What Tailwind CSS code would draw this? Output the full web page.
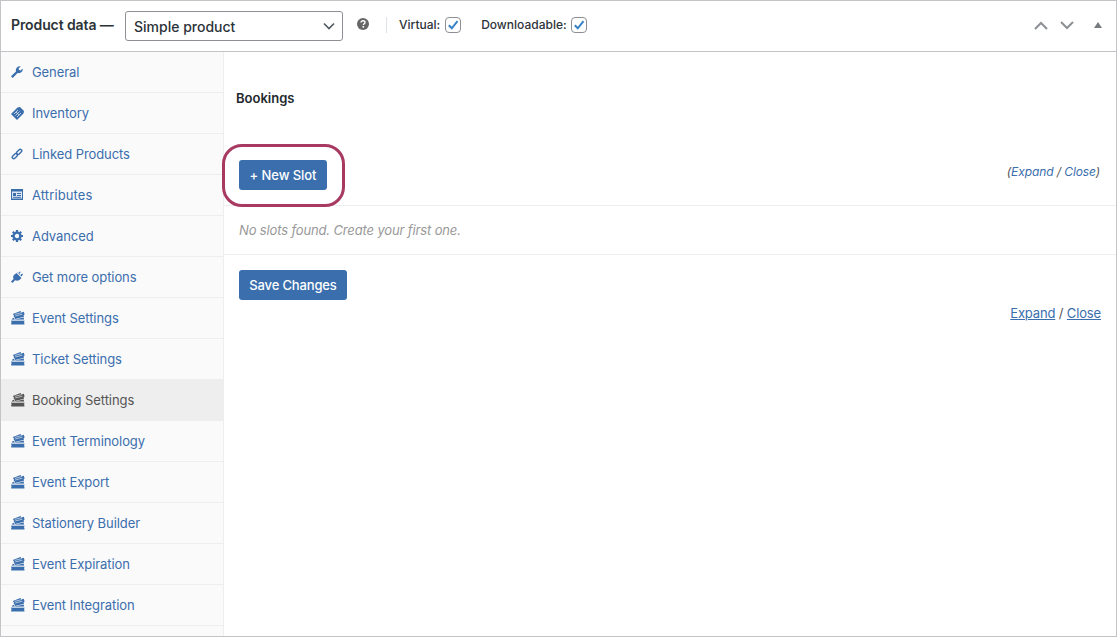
<!DOCTYPE html>
<html><head><meta charset="utf-8"><script src="https://cdn.jsdelivr.net/npm/@tailwindcss/browser@4"></script></head>
<body class="m-0 bg-white">
<svg width="0" height="0" class="absolute">
<defs>
<symbol id="tk" viewBox="0 0 14 14"><path fill="currentColor" d="M1.800 3 9.600 0 10.400 1.400 12.800 .8 13.600 3.600 12.600 4.200 13 5.800 4 8 3.400 6 2.600 5.600 3 4.400Z"/><path fill="currentColor" d="M1.200 7.400 3 6.800 3.600 8.400 12.800 6.400 13 8.800H.8Z"/><path fill="currentColor" d="M.2 9.400H13.400V10.600L12.800 11.200 13.400 11.800V13.400H.2V11.800L.8 11.200.2 10.600Z"/><path stroke="#fafafa" stroke-width=".6" fill="none" d="M3.800 3.400 10.600 1.600M4.200 5 11.400 3.200M1 9.100H13"/></symbol>
</defs></svg>
<div class="w-[1117px] h-[637px] border border-[#c3c4c7] box-border flex flex-col overflow-hidden font-['Inter',sans-serif] text-[13px] text-[#2c3338]">
  <header class="h-[51px] shrink-0 border-b border-[#c3c4c7] flex items-center pl-[10px] pr-[14px] box-border">
    <span class="font-semibold text-[14px] w-[114px] -mt-[4px] whitespace-nowrap tracking-[-0.1px]">Product data —</span>
    <div class="w-[218px] h-[30px] border border-[#8c8f94] rounded-[3px] flex items-center justify-between pl-[8px] pr-[6px] box-border text-[14px] font-medium">
      <span>Simple product</span>
      <svg width="14" height="14" viewBox="0 0 14 14" fill="none" stroke="#50575e" stroke-width="1.6"><path d="M2 4.500 7 9.500 12 4.500"/></svg>
    </div>
    <svg class="ml-[14px] -mt-[4px]" width="12" height="12" viewBox="0 0 12 12"><circle cx="6" cy="6" r="6" fill="#666"/><path d="M4 4.600C4 3.400 5 2.800 6 2.800 7.200 2.800 8 3.500 8 4.500 8 5.800 6.400 5.800 6.400 7" fill="none" stroke="#fff" stroke-width="1.400"/><rect x="5.500" y="8" width="1.600" height="1.600" fill="#fff"/></svg>
    <span class="w-px h-[16px] bg-[#dde3e8] ml-[17px] -mt-[3px]"></span>
    <span class="ml-[12px] font-medium text-[12px] -mt-[3px]">Virtual:</span>
    <span class="ml-[5px] w-[16px] h-[16px] border border-[#8c8f94] rounded-[4px] flex items-center justify-center -mt-[3px]"><svg width="12" height="12" viewBox="0 0 12 12" fill="none" stroke="#3582c4" stroke-width="2"><path d="M1.800 6.200 4.800 9.300 10.500 2.200"/></svg></span>
    <span class="ml-[20px] font-medium text-[12px] -mt-[3px]">Downloadable:</span>
    <span class="ml-[4px] w-[16px] h-[16px] border border-[#8c8f94] rounded-[4px] flex items-center justify-center -mt-[3px]"><svg width="12" height="12" viewBox="0 0 12 12" fill="none" stroke="#3582c4" stroke-width="2"><path d="M1.800 6.200 4.800 9.300 10.500 2.200"/></svg></span>
    <div class="ml-auto flex items-center gap-[12px] -mt-[2px]">
      <svg width="14" height="9" viewBox="0 0 14 9" fill="none" stroke="#8c8f94" stroke-width="2"><path d="M1 8 7 2 13 8"/></svg>
      <svg width="14" height="9" viewBox="0 0 14 9" fill="none" stroke="#8c8f94" stroke-width="2"><path d="M1 1 7 7 13 1"/></svg>
      <svg class="ml-[8px] -mt-[1px]" width="8" height="6" viewBox="0 0 8 6"><path d="M4 0 8 6H0Z" fill="#787c82"/></svg>
    </div>
  </header>
  <div class="flex flex-1 min-h-0">
    <nav class="w-[223px] shrink-0 bg-[#fafafa] border-r border-[#eee] box-border text-[#3a6ead] text-[13px] tracking-[-0.08px]">
      <a class="h-[41px] flex items-center border-b border-[#eee] box-border pl-[10px] gap-[10px]"><svg class="w-[12px] h-[12px] -mt-[1px] mr-[-1px]" viewBox="0 0 12 12"><path fill="currentColor" d="M0 10.300 5 5.400C4.600 3.600 5 2.400 6 1.400 7 .5 8.300.1 9.600.4L7.600 2.400 8 4 9.600 4.400 11.600 2.400C11.900 3.700 11.500 5 10.600 6 9.600 7 8.400 7.400 6.600 7L1.700 12Z"/></svg><span class="pt-[2px]">General</span></a>
      <a class="h-[41px] flex items-center border-b border-[#eee] box-border pl-[10px] gap-[10px]"><svg class="w-[13px] h-[13px] mr-[-2px]" viewBox="0 0 13 13"><path fill="currentColor" d="M0 7 6.500 .5 9 0 13 4 12.500 6.500 6 13Z"/><path stroke="#fafafa" stroke-width=".7" fill="none" d="M3 7 7 3M4.500 8.500 8.500 4.500M6 10 10 6M5 5 8 8"/></svg><span class="pt-[2px]">Inventory</span></a>
      <a class="h-[41px] flex items-center border-b border-[#eee] box-border pl-[10px] gap-[10px]"><svg class="w-[12px] h-[12px] -mt-[1px] mr-[-1px]" viewBox="0 0 12 12" fill="none" stroke="currentColor" stroke-width="1.400"><rect x="-3" y="-1.500" width="6" height="3" rx="1.500" transform="translate(3.800 8.200) rotate(-45)"/><rect x="-3" y="-1.500" width="6" height="3" rx="1.500" transform="translate(8.200 3.800) rotate(-45)"/></svg><span class="pt-[2px]">Linked Products</span></a>
      <a class="h-[41px] flex items-center border-b border-[#eee] box-border pl-[10px] gap-[10px]"><svg class="w-[12px] h-[11px] -mt-[1px] mr-[-1px]" viewBox="0 0 12 11"><rect width="12" height="11" fill="currentColor"/><rect x="1" y="2.500" width="10" height="7" fill="#dfe8f2"/><rect x="2" y="4" width="3" height="3" fill="currentColor"/><path stroke="currentColor" d="M6 4.500H10M6 6.500H10M2 8.300H10"/></svg><span class="pt-[2px] tracking-[0.1px]">Attributes</span></a>
      <a class="h-[41px] flex items-center border-b border-[#eee] box-border pl-[10px] gap-[10px]"><svg class="w-[12px] h-[12px] -mt-[1px] mr-[-1px]" viewBox="0 0 12 12"><circle cx="6" cy="6" r="3.400" fill="none" stroke="currentColor" stroke-width="2.400"/><path stroke="currentColor" stroke-width="2.200" d="M6 0V12M0 6H12M1.800 1.800 10.200 10.200M10.200 1.800 1.800 10.200" stroke-dasharray="2 8"/></svg><span class="pt-[2px]">Advanced</span></a>
      <a class="h-[41px] flex items-center border-b border-[#eee] box-border pl-[10px] gap-[10px]"><svg class="w-[12px] h-[12px] -mt-[1px] mr-[-1px]" viewBox="0 0 12 12"><path fill="currentColor" d="M5.500 2 10.500 7 8.500 9C7 10 5.500 10 4 9.300L1.500 12 0 10.500 2.600 8C2 6.500 2 5 3 4ZM6 .5 7.500 2 9 .5 9.800 1 8.300 2.800 9.500 4 11.200 2.600 12 3.400 10.500 5.500 6.500 1.500Z"/></svg><span class="pt-[2px]">Get more options</span></a>
      <a class="h-[41px] flex items-center border-b border-[#eee] box-border pl-[10px] gap-[10px]"><svg class="w-[14px] h-[14px] mr-[-3px]"><use href="#tk"/></svg><span class="pt-[2px]">Event Settings</span></a>
      <a class="h-[41px] flex items-center border-b border-[#eee] box-border pl-[10px] gap-[10px]"><svg class="w-[14px] h-[14px] mr-[-3px]"><use href="#tk"/></svg><span class="pt-[2px]">Ticket Settings</span></a>
      <a class="h-[41px] flex items-center border-b border-[#eee] box-border pl-[10px] gap-[10px] bg-[#eeeeee] text-[#555] -mr-px"><svg class="w-[14px] h-[14px] mr-[-3px]"><use href="#tk"/></svg><span class="pt-[2px]">Booking Settings</span></a>
      <a class="h-[41px] flex items-center border-b border-[#eee] box-border pl-[10px] gap-[10px]"><svg class="w-[14px] h-[14px] mr-[-3px]"><use href="#tk"/></svg><span class="pt-[2px]">Event Terminology</span></a>
      <a class="h-[41px] flex items-center border-b border-[#eee] box-border pl-[10px] gap-[10px]"><svg class="w-[14px] h-[14px] mr-[-3px]"><use href="#tk"/></svg><span class="pt-[2px]">Event Export</span></a>
      <a class="h-[41px] flex items-center border-b border-[#eee] box-border pl-[10px] gap-[10px]"><svg class="w-[14px] h-[14px] mr-[-3px]"><use href="#tk"/></svg><span class="pt-[2px]">Stationery Builder</span></a>
      <a class="h-[41px] flex items-center border-b border-[#eee] box-border pl-[10px] gap-[10px]"><svg class="w-[14px] h-[14px] mr-[-3px]"><use href="#tk"/></svg><span class="pt-[2px]">Event Expiration</span></a>
      <a class="h-[41px] flex items-center border-b border-[#eee] box-border pl-[10px] gap-[10px]"><svg class="w-[14px] h-[14px] mr-[-3px]"><use href="#tk"/></svg><span class="pt-[2px]">Event Integration</span></a>
    </nav>
    <main class="flex-1 min-w-0 relative">
      <h3 class="h-[93px] box-border pt-[37px] pl-[12px] font-semibold text-[13px] leading-[18px] text-[#23282d]">Bookings</h3>
      <div class="h-[61px] border-b border-[#eee] box-border flex items-center justify-between pl-[15px] pr-[16px]">
        <button class="w-[88px] h-[30px] pt-[2px] bg-[#3a6ead] text-white rounded-[3px] text-[13px] font-medium tracking-[-0.08px] flex items-center justify-center">+ New Slot</button>
        <span class="italic text-[12px] text-[#555] -mt-[7px] tracking-[-0.1px]">(<span class="text-[#3a6ead]">Expand</span> / <span class="text-[#3a6ead]">Close</span>)</span>
      </div>
      <p class="h-[49px] border-b border-[#eee] box-border pl-[15px] pt-[15px] italic text-[13px] leading-[18px] text-[#999] tracking-[-0.14px]">No slots found. Create your first one.</p>
      <div class="pl-[15px] pt-[15px]"><button class="w-[108px] h-[30px] pt-[2px] bg-[#3a6ead] text-white rounded-[3px] text-[13px] font-medium tracking-[-0.15px] flex items-center justify-center">Save Changes</button></div>
      <div class="text-right pr-[15px] pt-[4px] text-[13px] leading-[18px] text-[#555] tracking-[-0.15px]"><span class="underline text-[#3a6ead]">Expand</span> / <span class="underline text-[#3a6ead]">Close</span></div>
      <div class="absolute left-[-2px] top-[92px] w-[123px] h-[63px] border-[3px] border-[#a83a62] rounded-[20px] box-border"></div>
    </main>
  </div>
</div>
</body></html>
